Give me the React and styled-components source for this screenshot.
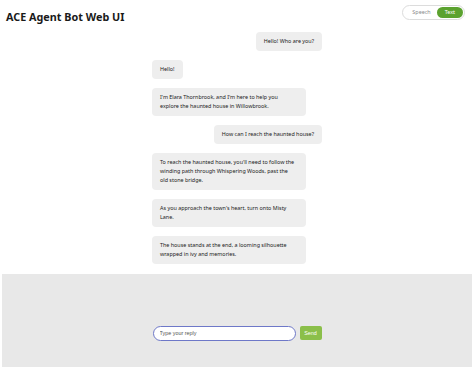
import React from "react";
import styled, { createGlobalStyle } from "styled-components";

const Global = createGlobalStyle`
  html, body { margin: 0; padding: 0; background: #ffffff; }
  body { font-family: "Noto Sans", "Open Sans", sans-serif; color: #1a1a1a; }
  * { box-sizing: border-box; }
`;

const Page = styled.div`
  display: flex;
  flex-direction: column;
  width: 474px;
  height: 367px;
  overflow: hidden;
`;

const Header = styled.header`
  display: flex;
  align-items: flex-start;
  justify-content: space-between;
  padding: 5px 10px 0 6px;
  height: 32px;
  flex: none;
`;

const Title = styled.h1`
  margin: 5px 0 0 0;
  font-size: 10.8px;
  font-weight: 700;
  line-height: 14px;
`;

const Toggle = styled.div`
  display: flex;
  align-items: center;
  gap: 5px;
  height: 15px;
  margin-right: -1px;
  padding: 0 1px 0 8px;
  border: 1px solid #dcdcdc;
  border-radius: 8px;
  background: #fff;
`;

const ToggleOption = styled.button`
  border: none;
  font-family: "Noto Sans", sans-serif;
  font-size: 5.4px;
  line-height: 11px;
  height: 11px;
  padding: 0 ${(p) => (p.$active ? "8px" : "1px")};
  border-radius: 6px;
  background: ${(p) => (p.$active ? "#5ba22f" : "transparent")};
  color: ${(p) => (p.$active ? "#ffffff" : "#8a8a8a")};
  cursor: pointer;
`;

const Chat = styled.main`
  display: flex;
  flex-direction: column;
  gap: 9px;
  width: 170px;
  margin: 0 auto;
  height: 242px;
  flex: none;
`;

const Bubble = styled.div`
  align-self: ${(p) => (p.$user ? "flex-end" : "flex-start")};
  width: ${(p) => (p.$wide ? "154px" : "auto")};
  max-width: 154px;
  padding: 5px 8px;
  border-radius: 4px;
  background: #eeeeee;
  font-size: 5.4px;
  line-height: 9px;
  color: #222;
`;

const Line = styled.span`
  display: block;
  white-space: nowrap;
`;

const Footer = styled.footer`
  display: flex;
  align-items: center;
  justify-content: center;
  gap: 4px;
  margin: 0 2px;
  flex: 1;
  background: #e8e8e8;
  padding-top: 25px;
`;

const Input = styled.input`
  width: 143px;
  height: 15px;
  padding: 0 6px;
  border: 1px solid #6e78c8;
  border-radius: 8px;
  background: #fff;
  font-family: "Liberation Sans", Arial, sans-serif;
  font-size: 5.4px;
  outline: none;
  &::placeholder { color: #555; }
`;

const SendButton = styled.button`
  width: 22px;
  height: 14px;
  padding: 0;
  border: none;
  border-radius: 2px;
  background: #8bbf4a;
  color: #fff;
  font-family: "Liberation Sans", Arial, sans-serif;
  font-size: 5.4px;
`;

const messages = [
  { user: true, lines: ["Hello! Who are you?"] },
  { user: false, lines: ["Hello!"] },
  { user: false, lines: ["I'm Elara Thornbrook, and I'm here to help you", "explore the haunted house in Willowbrook."] },
  { user: true, lines: ["How can I reach the haunted house?"] },
  { user: false, lines: ["To reach the haunted house, you'll need to follow the", "winding path through Whispering Woods, past the", "old stone bridge."] },
  { user: false, lines: ["As you approach the town's heart, turn onto Misty", "Lane."] },
  { user: false, lines: ["The house stands at the end, a looming silhouette", "wrapped in ivy and memories."] },
];

export default function App() {
  return (
    <>
      <Global />
      <Page>
        <Header>
          <Title>ACE Agent Bot Web UI</Title>
          <Toggle>
            <ToggleOption>Speech</ToggleOption>
            <ToggleOption $active>Text</ToggleOption>
          </Toggle>
        </Header>
        <Chat>
          {messages.map((m, i) => (
            <Bubble key={i} $user={m.user} $wide={!m.user && m.lines.length > 1}>
              {m.lines.map((l, j) => (
                <Line key={j}>{l}</Line>
              ))}
            </Bubble>
          ))}
        </Chat>
        <Footer>
          <Input placeholder="Type your reply" />
          <SendButton>Send</SendButton>
        </Footer>
      </Page>
    </>
  );
}
